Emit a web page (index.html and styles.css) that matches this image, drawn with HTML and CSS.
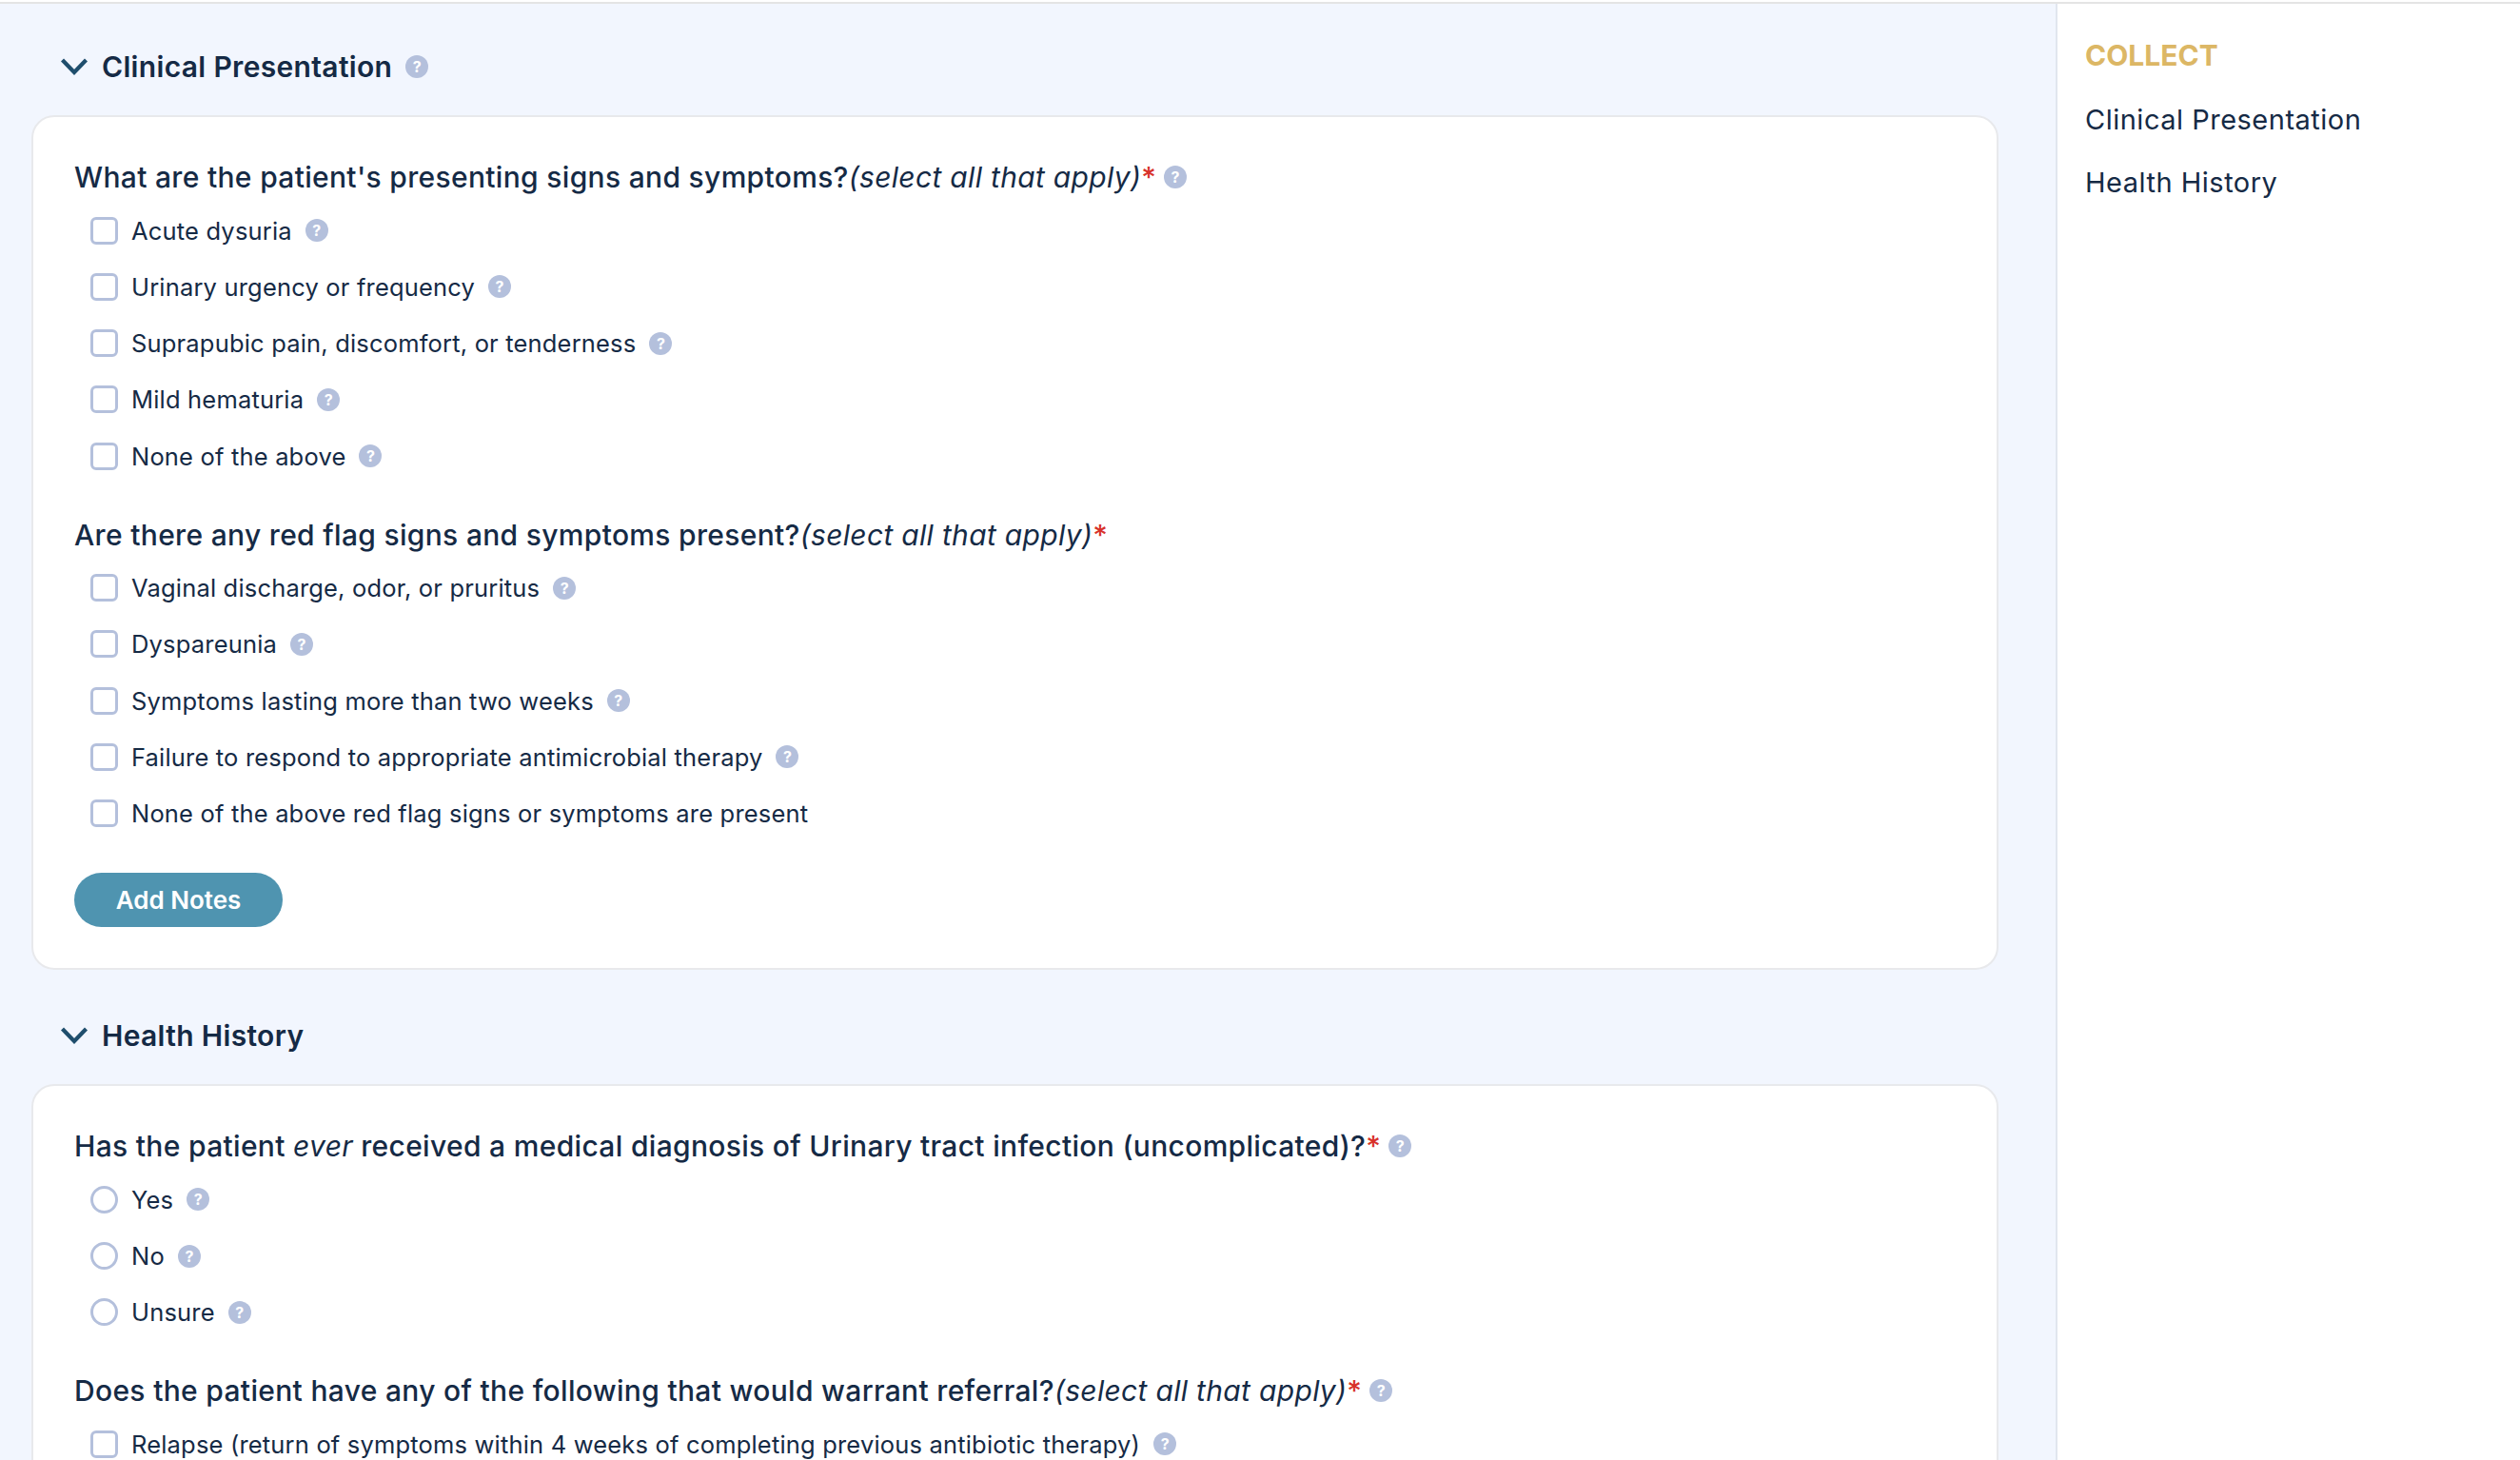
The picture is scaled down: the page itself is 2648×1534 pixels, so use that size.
FILE: index.html
```html
<!DOCTYPE html>
<html lang="en">
<head>
<meta charset="utf-8">
<title>Collect</title>
<link rel="stylesheet" href="styles.css">
</head>
<body>
<div class="page">
<main class="main">
  <h2 class="section-head">
    <svg class="chevron" viewBox="0 0 28 18"><path d="M1.5 2 14 15 26.5 2"/></svg>
    <span>Clinical Presentation</span><span class="help">?</span>
  </h2>
  <section class="card">
    <div class="question"><span>What are the patient's presenting signs and symptoms?<em>(select all that apply)</em><b>*</b></span><span class="help">?</span></div>
    <div class="options">
      <label class="option"><i class="check"></i><span>Acute dysuria</span><span class="help">?</span></label>
      <label class="option"><i class="check"></i><span>Urinary urgency or frequency</span><span class="help">?</span></label>
      <label class="option"><i class="check"></i><span>Suprapubic pain, discomfort, or tenderness</span><span class="help">?</span></label>
      <label class="option"><i class="check"></i><span>Mild hematuria</span><span class="help">?</span></label>
      <label class="option"><i class="check"></i><span>None of the above</span><span class="help">?</span></label>
    </div>
    <div class="question"><span>Are there any red flag signs and symptoms present?<em>(select all that apply)</em><b>*</b></span></div>
    <div class="options">
      <label class="option"><i class="check"></i><span>Vaginal discharge, odor, or pruritus</span><span class="help">?</span></label>
      <label class="option"><i class="check"></i><span>Dyspareunia</span><span class="help">?</span></label>
      <label class="option"><i class="check"></i><span>Symptoms lasting more than two weeks</span><span class="help">?</span></label>
      <label class="option"><i class="check"></i><span>Failure to respond to appropriate antimicrobial therapy</span><span class="help">?</span></label>
      <label class="option"><i class="check"></i><span>None of the above red flag signs or symptoms are present</span></label>
    </div>
    <button class="notes">Add Notes</button>
  </section>
  <h2 class="section-head later">
    <svg class="chevron" viewBox="0 0 28 18"><path d="M1.5 2 14 15 26.5 2"/></svg>
    <span>Health History</span>
  </h2>
  <section class="card">
    <div class="question"><span>Has the patient <em>ever</em> received a medical diagnosis of Urinary tract infection (uncomplicated)?<b>*</b></span><span class="help">?</span></div>
    <div class="options">
      <label class="option"><i class="radio"></i><span>Yes</span><span class="help">?</span></label>
      <label class="option"><i class="radio"></i><span>No</span><span class="help">?</span></label>
      <label class="option"><i class="radio"></i><span>Unsure</span><span class="help">?</span></label>
    </div>
    <div class="question"><span>Does the patient have any of the following that would warrant referral?<em>(select all that apply)</em><b>*</b></span><span class="help">?</span></div>
    <div class="options">
      <label class="option"><i class="check"></i><span>Relapse (return of symptoms within 4 weeks of completing previous antibiotic therapy)</span><span class="help">?</span></label>
    </div>
  </section>
</main>
<aside class="side">
  <div class="side-title">COLLECT</div>
  <a class="side-link">Clinical Presentation</a>
  <a class="side-link">Health History</a>
</aside>
</div>
</body>
</html>
```
FILE: styles.css
```css
* { box-sizing: border-box; }
html, body { margin: 0; height: 100%; overflow: hidden; background: #fff; }
body { padding-top: 2px; font-family: "Inter", "Open Sans", sans-serif; color: #152a45; }
.page { display: flex; height: 100%; border-top: 2px solid #e4e4e4; }
.main { width: 2162px; flex: none; background: #f2f6fe; border-right: 2px solid #e1e6ee; padding: 40px 60px 0 33px; overflow: hidden; }
.section-head { display: flex; align-items: center; height: 52px; margin: 0 0 25px; padding-left: 31px; font-size: 30px; font-weight: 600; letter-spacing: 0.33px; }
.section-head.later { margin-top: 43px; }
.chevron { width: 28px; height: 18px; margin-right: 15px; flex: none; }
.chevron path { fill: none; stroke: #1f4e6d; stroke-width: 4.2; }
.card { background: #fff; border: 2px solid #e8e9ec; border-radius: 24px; padding: 43px 42px 43px 43px; }
.question { display: flex; align-items: center; height: 40px; font-size: 30px; font-weight: 500; letter-spacing: 0.32px; white-space: nowrap; }
.question .help { margin-left: 8px; }
.question em { font-weight: 400; }
.question b { color: #d8322a; font-weight: 500; }
.options { display: flex; flex-direction: column; margin: 6.4px 0 33px 17px; }
.option { display: flex; align-items: center; height: 59.25px; font-size: 25.5px; letter-spacing: 0.18px; white-space: nowrap; }
.check, .radio { width: 29px; height: 29px; margin-right: 14px; flex: none; background: #fff; border: 3px solid #b4c0dc; }
.check { border-radius: 6px; }
.radio { border-radius: 50%; }
.help { display: inline-flex; align-items: center; justify-content: center; width: 24px; height: 24px; margin-left: 14px; flex: none; border-radius: 50%; background: #b4c0dc; color: #fff; font-size: 16px; font-weight: 700; letter-spacing: 0; font-style: normal; }
.notes { display: block; width: 219px; height: 57px; padding: 0; border: 0; border-radius: 29px; background: #4f94b0; color: #fff; font: 600 26px "Inter", sans-serif; }
.side { flex: 1; padding: 27px 29px; }
.side-title { height: 54px; line-height: 54px; font-size: 30px; font-weight: 700; color: #dcb765; margin-bottom: 8px; }
.side-link { display: flex; align-items: center; height: 65.5px; font-size: 29px; letter-spacing: 0.5px; }
```
